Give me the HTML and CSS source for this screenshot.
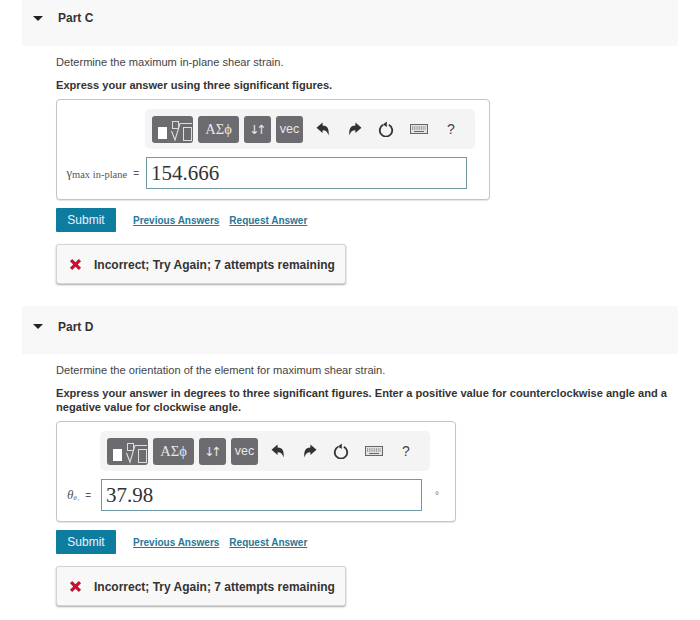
FILE: index.html
```html
<!DOCTYPE html>
<html lang="en">
<head>
<meta charset="utf-8">
<title>Parts</title>
<link rel="stylesheet" href="styles.css">
<svg class="defs" width="0" height="0" aria-hidden="true">
  <symbol id="ic-undo" viewBox="0 0 14 14"><path d="M0.5 5.8 L6.6 0.6 V3.6 C11 3.6 13.4 6.6 12.6 13.4 C11.6 10 10 8.2 6.6 8.2 V11 Z" fill="#333"/></symbol>
  <symbol id="ic-redo" viewBox="0 0 14 14"><path d="M13.5 5.8 L7.4 0.6 V3.6 C3 3.6 0.6 6.6 1.4 13.4 C2.4 10 4 8.2 7.4 8.2 V11 Z" fill="#333"/></symbol>
  <symbol id="ic-reset" viewBox="0 0 16 16"><path d="M5.2 3.8 A6.2 6.2 0 1 0 10.8 3.8" fill="none" stroke="#333" stroke-width="1.8"/><path d="M8.8 0.4 L5 3.4 L8.8 6 Z" fill="#333"/></symbol>
  <symbol id="ic-kbd" viewBox="0 0 18 10"><rect x="0.5" y="0.5" width="17" height="9" fill="#e4e4e4" stroke="#666"/><path d="M2 3h14M2 5h14" stroke="#666" stroke-width="1" stroke-dasharray="1 .8"/><path d="M4 7.5h10" stroke="#666" stroke-width="1"/></symbol>
  <symbol id="ic-tmpl" viewBox="0 0 40 27"><rect x="5" y="11" width="9" height="12" fill="#fff"/><rect x="30.500" y="11.500" width="8" height="13" fill="none" stroke="#ddd"/><rect x="19.500" y="5.500" width="6" height="7" fill="none" stroke="#ddd"/><path d="M18.500 15 L22 24 L27 7.500 H39" fill="none" stroke="#ddd" stroke-width="1.100"/></symbol>
  <symbol id="ic-x" viewBox="0 0 14 14"><path d="M3.4 1 L7 4.600 L10.600 1 L13 3.400 L9.400 7 L13 10.600 L10.600 13 L7 9.400 L3.400 13 L1 10.600 L4.600 7 L1 3.400 Z" fill="#c8102e"/></symbol>
</svg>
</head>
<body>
<section class="part">
  <header class="part-head"><span class="caret"></span><h2 class="part-title">Part C</h2></header>
  <div class="part-body">
    <p class="prompt">Determine the maximum in-plane shear strain.</p>
    <p class="instr">Express your answer using three significant figures.</p>
    <div class="answer answer-c">
      <div class="toolbar">
        <span class="tool tool-tmpl"><svg class="tmpl"><use href="#ic-tmpl"/></svg></span>
        <span class="tool tool-greek">ΑΣϕ</span>
        <span class="tool tool-arrows">↓↑</span>
        <span class="tool tool-vec">vec</span>
        <svg class="act"><use href="#ic-undo"/></svg>
        <svg class="act"><use href="#ic-redo"/></svg>
        <svg class="act act-reset"><use href="#ic-reset"/></svg>
        <svg class="act act-kbd"><use href="#ic-kbd"/></svg>
        <span class="act act-help">?</span>
      </div>
      <div class="entry">
        <span class="label"><span class="sym">γ</span><span class="sub">max in-plane</span><span class="eq">=</span></span>
        <span class="field">154.666</span>
      </div>
    </div>
    <div class="actions">
      <span class="submit">Submit</span>
      <a class="link" href="#">Previous Answers</a>
      <a class="link" href="#">Request Answer</a>
    </div>
    <div class="feedback"><svg class="x"><use href="#ic-x"/></svg><span>Incorrect; Try Again; 7 attempts remaining</span></div>
  </div>
</section>
<section class="part part-d">
  <header class="part-head"><span class="caret"></span><h2 class="part-title">Part D</h2></header>
  <div class="part-body">
    <p class="prompt">Determine the orientation of the element for maximum shear strain.</p>
    <p class="instr">Express your answer in degrees to three significant figures. Enter a positive value for counterclockwise angle and a negative value for clockwise angle.</p>
    <div class="answer answer-d">
      <div class="toolbar">
        <span class="tool tool-tmpl"><svg class="tmpl"><use href="#ic-tmpl"/></svg></span>
        <span class="tool tool-greek">ΑΣϕ</span>
        <span class="tool tool-arrows">↓↑</span>
        <span class="tool tool-vec">vec</span>
        <svg class="act"><use href="#ic-undo"/></svg>
        <svg class="act"><use href="#ic-redo"/></svg>
        <svg class="act act-reset"><use href="#ic-reset"/></svg>
        <svg class="act act-kbd"><use href="#ic-kbd"/></svg>
        <span class="act act-help">?</span>
      </div>
      <div class="entry">
        <span class="label"><span class="sym theta">θ</span><span class="sub sub-small">θ₁</span><span class="eq">=</span></span>
        <span class="field">37.98</span>
        <span class="unit">°</span>
      </div>
    </div>
    <div class="actions">
      <span class="submit">Submit</span>
      <a class="link" href="#">Previous Answers</a>
      <a class="link" href="#">Request Answer</a>
    </div>
    <div class="feedback"><svg class="x"><use href="#ic-x"/></svg><span>Incorrect; Try Again; 7 attempts remaining</span></div>
  </div>
</section>
</body>
</html>
```
FILE: styles.css
```css
* { box-sizing: border-box; }
html, body { margin: 0; padding: 0; background: #fff; }
body { width: 700px; height: 620px; overflow: hidden; font-family: "Liberation Sans", Arial, sans-serif; color: #333; }
.defs { position: absolute; }
.part { margin: 0 22px; }
.part-d { margin-top: 22px; }
.part-head { display: flex; align-items: center; height: 46px; background: #f8f8f8; padding-bottom: 10px; }
.part-d .part-head { height: 48px; padding-bottom: 7px; }
.caret { width: 0; height: 0; border-left: 5px solid transparent; border-right: 5px solid transparent; border-top: 5px solid #222; margin-left: 11px; }
.part-title { margin: 0 0 0 15px; font-size: 12px; font-weight: 700; color: #333; }
.part-body { padding: 10px 0 0 34px; }
.prompt { margin: 0; font-size: 11.1px; line-height: 12px; color: #444; }
.instr { margin: 10px 0 0; font-size: 11.1px; line-height: 14px; font-weight: 700; color: #333; max-width: 622px; }
.answer { margin-top: 7px; height: 101px; border: 1px solid #c4c4c4; border-radius: 4px; padding: 9px 0 0; box-shadow: 0 1px 1px #e4e4e4; background: #fff; }
.answer-c { width: 434px; }
.answer-d { width: 400px; }
.toolbar { display: flex; align-items: center; height: 40px; width: 330px; background: #f4f4f4; border-radius: 5px; padding-left: 7px; }
.answer-c .toolbar { margin-left: 88px; }
.answer-d .toolbar { margin-left: 43px; }
.tool { display: flex; align-items: center; justify-content: center; height: 27px; margin-right: 5px; background: #6b6b70; color: #e8e8e8; border-radius: 3px; font-size: 12.5px; }
.tool-tmpl { width: 41px; }
.tool-greek { width: 41px; font-family: "Liberation Serif", "DejaVu Serif", serif; font-size: 14.5px; }
.tool-arrows { width: 27px; font-family: "DejaVu Sans", sans-serif; font-size: 12.5px; letter-spacing: -3.5px; padding-right: 3px; }
.tool-vec { width: 27px; margin-right: 0; }
.tmpl { width: 40px; height: 27px; }
.act { width: 14px; height: 14px; margin-left: 13px; margin-right: 5px; flex: none; }
.act-reset { width: 16px; height: 16px; margin-left: 11px; }
.act-kbd { width: 18px; height: 10px; margin-left: 11px; margin-right: 3px; }
.act-help { width: auto; height: auto; margin-left: 16px; margin-right: 0; font-size: 14px; line-height: 16px; color: #444; }
.entry { display: flex; align-items: center; height: 32px; margin-top: 8px; }
.label { display: flex; align-items: baseline; justify-content: flex-end; flex: none; font-family: "Liberation Serif", serif; color: #555; font-size: 10px; padding-right: 7px; white-space: pre; }
.answer-c .label { width: 89px; }
.answer-d .label { width: 44px; padding-right: 10px; }
.sym { font-size: 12.5px; }
.theta { font-style: italic; font-size: 13px; }
.sub { font-size: 10.5px; position: relative; top: 1px; }
.sub-small { font-size: 7px; font-style: italic; }
.eq { font-family: "Liberation Sans", sans-serif; font-size: 10px; margin-left: 6px; }
.field { display: flex; align-items: center; width: 321px; height: 32px; border: 1px solid #6f9aa6; padding-left: 4px; font-family: "Liberation Serif", serif; font-size: 21px; color: #333; }
.unit { margin-left: 13px; font-size: 10px; color: #777; }
.actions { display: flex; align-items: center; margin-top: 8px; height: 24px; }
.submit { display: flex; align-items: center; justify-content: center; width: 60px; height: 24px; background: #0e7c9f; color: #eef; border-radius: 1px; font-size: 12px; margin-right: 17px; }
.link { color: #2a7797; font-size: 10px; font-weight: 700; margin-right: 10px; text-decoration: underline; }
.feedback { display: flex; align-items: center; width: 290px; height: 40px; margin-top: 12px; padding-left: 12px; padding-top: 1px; background: #f8f8f8; border: 1px solid #d4d4d4; border-radius: 3px; box-shadow: 0 1px 2px #aaa; font-size: 12px; font-weight: 700; color: #333; white-space: nowrap; }
.x { width: 13px; height: 13px; margin-right: 12px; flex: none; }
```
